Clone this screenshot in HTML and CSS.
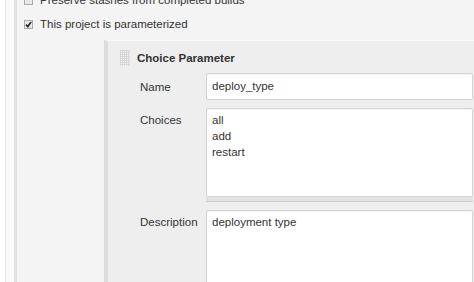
FILE: index.html
```html
<!DOCTYPE html>
<html lang="en">
<head>
    <meta charset="UTF-8">
    <title>Job configuration</title>
    <link rel="stylesheet" href="styles.css">
</head>
<body>
    <div class="page">
        <div class="section">
            <div class="options">
                <div class="option"><span class="box"></span>Preserve stashes from completed builds</div>
                <div class="option">
                    <span class="box">
                        <svg width="7" height="7" viewBox="0 0 7 7"><path d="M1 3.6 L2.8 5.6 L6 1" fill="none" stroke="#222" stroke-width="1.6"/></svg>
                    </span>This project is parameterized
                </div>
            </div>

            <!-- Choice parameter block -->
            <div class="chunk">
                <div class="chunk-head">
                    <span class="handle"></span>
                    <b>Choice Parameter</b>
                </div>
                <div class="form">
                    <div class="label">Name</div>
                    <div class="field">
                        <div class="input">deploy_type</div>
                    </div>

                    <div class="label label-area">Choices</div>
                    <div class="field">
                        <div class="textarea choices">all<br>add<br>restart</div>
                        <div class="textarea-handle"></div>
                    </div>

                    <div class="label label-area">Description</div>
                    <div class="field">
                        <div class="textarea desc">deployment type</div>
                    </div>
                </div>
            </div>
        </div>
    </div>
</body>
</html>
```

FILE: styles.css
```css
body {
    margin: 0;
    background: #fff;
    font-family: "Liberation Sans", Arial, sans-serif;
    font-size: 11.5px;
    color: #333;
    overflow: hidden;
}
.page {
    margin-left: 5px;
    border-left: 1px solid #e4e4e4;
    background: #fafafa;
    padding-left: 8px;
    height: 282px;
    overflow: hidden;
}
.section {
    display: flow-root;
    border-left: 3px solid #e2e2e2;
    background: #f4f4f4;
    height: 282px;
}
.options {
    margin-top: -12px;
    padding-left: 7px;
}
.option {
    display: flex;
    align-items: center;
    height: 24px;
}
.box {
    width: 7px;
    height: 7px;
    border: 1px solid #a8a8a8;
    background: #e8e8e8;
    margin-right: 7px;
    display: flex;
    align-items: center;
    justify-content: center;
}
.chunk {
    margin-top: 4px;
    margin-left: 87px;
    border-left: 4px solid #dcdcdc;
    border-top: 1px solid #f9f9f9;
    background: #eeeeee;
    height: 260px;
}
.chunk-head {
    display: flex;
    align-items: center;
    height: 16px;
    margin-top: 9px;
    padding-left: 12px;
}
.handle {
    width: 10px;
    height: 16px;
    margin-right: 7px;
    background-image:
        linear-gradient(to right, #d6d6d6 1px, transparent 1px),
        linear-gradient(to bottom, #d6d6d6 1px, transparent 1px);
    background-size: 2px 2px;
    background-color: #f6f6f6;
}
.form {
    display: grid;
    grid-template-columns: 66px 1fr;
    row-gap: 8px;
    margin-top: 7px;
    padding-left: 32px;
    padding-right: 1px;
}
.label {
    padding-top: 6px;
    line-height: 16px;
}
.label-area {
    padding-top: 4px;
}
.input, .textarea {
    background: #fff;
    border: 1px solid #d4d4d4;
    border-radius: 2px;
    box-shadow: inset 0 1px 1px rgba(0, 0, 0, 0.05);
    padding: 0 5px;
    line-height: 16px;
}
.input {
    height: 25px;
    line-height: 25px;
}
.textarea {
    padding-top: 3px;
}
.choices {
    height: 84px;
}
.desc {
    padding-top: 3px;
    height: 80px;
}
.textarea-handle {
    height: 4px;
    background: #e2e2e2;
    border-bottom: 1px solid #d0d0d0;
}
```
